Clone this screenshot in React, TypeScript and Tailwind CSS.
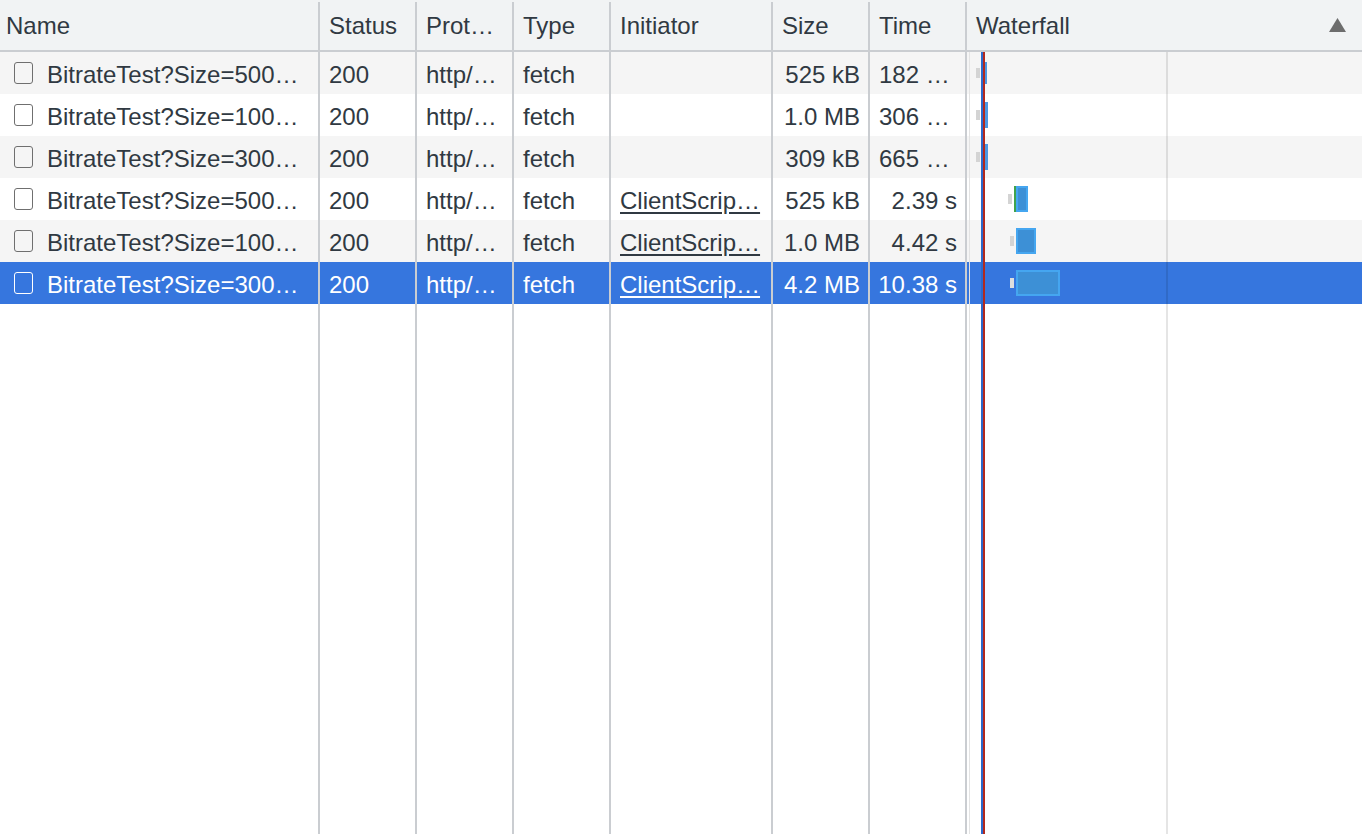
/* DevTools network panel — request table + waterfall */

type Bar = { left: number; top: number; width: number; height: number; kind: 'queue' | 'thin' | 'box' | 'green' };

type Row = {
  name: string;
  initiator: string;
  size: string;
  time: string;
  timeLeft?: boolean;
  bars: Bar[];
};

const rows: Row[] = [
  {
    name: 'BitrateTest?Size=500…', initiator: '', size: '525 kB', time: '182 …', timeLeft: true,
    bars: [
      { kind: 'queue', left: 9, top: 16, width: 4, height: 10 },
      { kind: 'thin', left: 18, top: 10, width: 2, height: 22 },
    ],
  },
  {
    name: 'BitrateTest?Size=100…', initiator: '', size: '1.0 MB', time: '306 …', timeLeft: true,
    bars: [
      { kind: 'queue', left: 9, top: 16, width: 4, height: 10 },
      { kind: 'thin', left: 18, top: 8, width: 3, height: 26 },
    ],
  },
  {
    name: 'BitrateTest?Size=300…', initiator: '', size: '309 kB', time: '665 …', timeLeft: true,
    bars: [
      { kind: 'queue', left: 9, top: 16, width: 4, height: 10 },
      { kind: 'thin', left: 18, top: 8, width: 3, height: 26 },
    ],
  },
  {
    name: 'BitrateTest?Size=500…', initiator: 'ClientScrip…', size: '525 kB', time: '2.39 s',
    bars: [
      { kind: 'queue', left: 41, top: 16, width: 4, height: 10 },
      { kind: 'green', left: 47, top: 8, width: 2, height: 26 },
      { kind: 'box', left: 49, top: 8, width: 12, height: 26 },
    ],
  },
  {
    name: 'BitrateTest?Size=100…', initiator: 'ClientScrip…', size: '1.0 MB', time: '4.42 s',
    bars: [
      { kind: 'queue', left: 43, top: 16, width: 4, height: 10 },
      { kind: 'box', left: 49, top: 8, width: 20, height: 26 },
    ],
  },
  {
    name: 'BitrateTest?Size=300…', initiator: 'ClientScrip…', size: '4.2 MB', time: '10.38 s',
    bars: [
      { kind: 'queue', left: 43, top: 16, width: 4, height: 10 },
      { kind: 'box', left: 49, top: 8, width: 44, height: 26 },
    ],
  },
];

const grid = 'grid grid-cols-[320px_97px_97px_97px_162px_97px_97px_1fr]';
const line = 'border-r-2 border-[#cacdd1]';

function Checkbox({ selected }: { selected: boolean }) {
  return (
    <span className={`shrink-0 w-[19px] h-[22px] rounded-[3px] border-[1.5px] ${selected ? 'border-white' : 'border-[#6f6f6f]'}`} />
  );
}

function WaterBar({ bar, selected }: { bar: Bar; selected: boolean }) {
  const cls =
    bar.kind === 'queue' ? (selected ? 'bg-[#dedede]' : 'bg-[#d4d4d4]')
    : bar.kind === 'green' ? 'bg-[#3fa34d]'
    : bar.kind === 'thin' ? 'bg-[#4b97e3]'
    : 'bg-[#3d90d6] border-2 border-[#45a6f0]';
  return (
    <div className={`absolute ${cls}`}
      style={{ left: bar.left, top: bar.top, width: bar.width, height: bar.height }} />
  );
}

export default function App() {
  return (
    <div className="h-[834px] w-full flex flex-col overflow-hidden bg-white text-[#303942] text-[24px] font-['Liberation_Sans',Arial,sans-serif]">
      {/* Header */}
      <div className={`${grid} h-[52px] shrink-0 bg-[#f1f3f4] border-b-2 border-[#cacdd1] pt-[2px]`}>
        <div className={`${line} flex items-center pl-[6px]`}>Name</div>
        <div className={`${line} flex items-center pl-[9px]`}>Status</div>
        <div className={`${line} flex items-center pl-[9px]`}>Prot…</div>
        <div className={`${line} flex items-center pl-[9px]`}>Type</div>
        <div className={`${line} flex items-center pl-[9px]`}>Initiator</div>
        <div className={`${line} flex items-center pl-[9px]`}>Size</div>
        <div className={`${line} flex items-center pl-[9px]`}>Time</div>
        <div className="flex items-center justify-between pl-[9px] pr-[16px]">
          <span>Waterfall</span>
          <svg width="17" height="14" viewBox="0 0 17 14" className="-mt-[2px]"><path d="M8.5 0L17 14H0z" fill="#6d6d6d" /></svg>
        </div>
      </div>

      {/* Body */}
      <div className="relative flex-1 flex flex-col">
        {rows.map((r, i) => {
          const selected = i === rows.length - 1;
          const bg = selected ? 'bg-[#3676de] text-white' : i % 2 === 0 ? 'bg-[#f5f5f5]' : 'bg-white';
          return (
            <div key={i} className={`${grid} h-[42px] shrink-0 whitespace-nowrap ${bg}`}>
              <div className={`${line} flex items-center gap-[14px] pl-[14px] overflow-hidden`}>
                <Checkbox selected={selected} />
                <span className="pt-[3px]">{r.name}</span>
              </div>
              <div className={`${line} flex items-center pl-[9px] pt-[3px]`}>200</div>
              <div className={`${line} flex items-center pl-[9px] pt-[3px]`}>http/…</div>
              <div className={`${line} flex items-center pl-[9px] pt-[3px]`}>fetch</div>
              <div className={`${line} flex items-center pl-[9px] pt-[3px] overflow-hidden`}>
                {r.initiator && <span className="underline underline-offset-[3px]">{r.initiator}</span>}
              </div>
              <div className={`${line} flex items-center justify-end pr-[8px] pt-[3px]`}>{r.size}</div>
              <div className={`${line} flex items-center pt-[3px] ${r.timeLeft ? 'pl-[9px]' : 'justify-end pr-[8px]'}`}>{r.time}</div>
              <div className="relative">
                {r.bars.map((b, j) => <WaterBar key={j} bar={b} selected={selected} />)}
              </div>
            </div>
          );
        })}

        {/* Empty area below the rows */}
        <div className={`${grid} flex-1`}>
          <div className={line} />
          <div className={line} />
          <div className={line} />
          <div className={line} />
          <div className={line} />
          <div className={line} />
          <div className={line} />
          <div />
        </div>

        {/* Waterfall overlay lines */}
        <div className="absolute top-0 bottom-0 left-[969px] w-px bg-[#e3e3e3]" />
        <div className="absolute top-0 bottom-0 left-[1166px] w-[2px] bg-black/10" />
        <div className="absolute top-0 bottom-0 left-[981px] w-[2px] bg-[#2b68cb]" />
        <div className="absolute top-0 bottom-0 left-[983px] w-[2px] bg-[#b1291f]" />
      </div>
    </div>
  );
}
